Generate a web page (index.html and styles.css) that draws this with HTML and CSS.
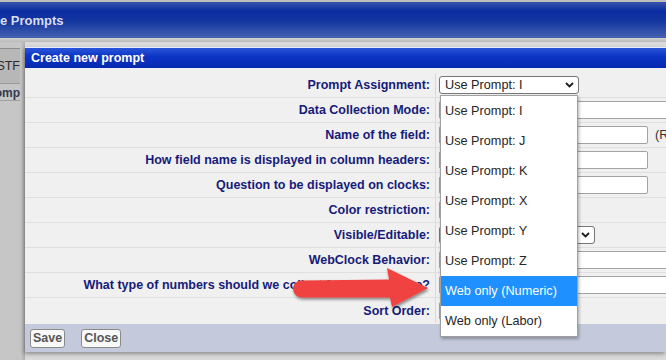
FILE: index.html
```html
<!DOCTYPE html>
<html lang="en">
<head>
  <meta charset="UTF-8" />
  <title>Prompts</title>
  <link rel="stylesheet" href="styles.css">
</head>
<body>
  <div class="topline"></div>
  <header class="appbar">
    <h1>e Prompts</h1>
  </header>
  <div class="appbar-sep"></div>

  <div class="main">
    <aside class="side">
      <div class="side-tab"><span>STF</span></div>
      <div class="side-link"><span>omp</span></div>
    </aside>

    <section class="dialog">
      <div class="dlg-title">Create new prompt</div>

      <div class="dlg-body">
        <div class="row">
          <div class="lbl">Prompt Assignment:</div>
          <div class="val">
            <div class="select-wrap">
              <div class="sel w140">
                <span>Use Prompt: I</span>
                <svg class="chev" width="9" height="6" viewBox="0 0 9 6"><path d="M1 1l3.5 3.5L8 1" /></svg>
              </div>
              <ul class="dropdown">
                <li>Use Prompt: I</li>
                <li>Use Prompt: J</li>
                <li>Use Prompt: K</li>
                <li>Use Prompt: X</li>
                <li>Use Prompt: Y</li>
                <li>Use Prompt: Z</li>
                <li class="active">Web only (Numeric)</li>
                <li>Web only (Labor)</li>
              </ul>
            </div>
          </div>
        </div>

        <div class="row">
          <div class="lbl">Data Collection Mode:</div>
          <div class="val"><div class="field w300"></div></div>
        </div>

        <div class="row">
          <div class="lbl">Name of the field:</div>
          <div class="val"><div class="field w209"></div><span class="note">(Required)</span></div>
        </div>

        <div class="row">
          <div class="lbl">How field name is displayed in column headers:</div>
          <div class="val"><div class="field w209"></div></div>
        </div>

        <div class="row">
          <div class="lbl">Question to be displayed on clocks:</div>
          <div class="val"><div class="field w209"></div></div>
        </div>

        <div class="row">
          <div class="lbl">Color restriction:</div>
          <div class="val"><div class="field w100"></div></div>
        </div>

        <div class="row">
          <div class="lbl">Visible/Editable:</div>
          <div class="val">
            <div class="sel sel-end w156">
              <svg class="chev" width="9" height="6" viewBox="0 0 9 6"><path d="M1 1l3.5 3.5L8 1" /></svg>
            </div>
          </div>
        </div>

        <div class="row">
          <div class="lbl">WebClock Behavior:</div>
          <div class="val"><div class="field w300"></div></div>
        </div>

        <div class="row">
          <div class="lbl">What type of numbers should we collect for this line type?</div>
          <div class="val"><div class="field w300"></div></div>
        </div>

        <div class="row">
          <div class="lbl">Sort Order:</div>
          <div class="val"><div class="field w100"></div></div>
        </div>
      </div>

      <div class="dlg-foot">
        <button class="btn">Save</button>
        <button class="btn">Close</button>
      </div>
    </section>
  </div>

  <!-- callout arrow laid over the form -->
  <svg class="callout" width="150" height="52" viewBox="0 0 150 52">
    <defs>
      <filter id="shade" x="-10%" y="-30%" width="130%" height="170%">
        <feDropShadow dx="1" dy="2" stdDeviation="1.6" flood-color="#000" flood-opacity="0.45" />
      </filter>
    </defs>
    <path filter="url(#shade)" d="M16.5 18.5 L104 17.5 L102 6 L143 26 L107 45 L105 35.5 L16.5 35.5 A8.5 8.5 0 0 1 16.5 18.5 Z" />
  </svg>
</body>
</html>
```

FILE: styles.css
```css
html, body {
  margin: 0;
  padding: 0;
}

body {
  position: relative;
  width: 666px;
  height: 360px;
  overflow: hidden;
  background-color: #e9e9e9;
  font-family: 'Liberation Sans', Arial, sans-serif;
}

.topline {
  height: 2px;
  background: #bdbdbd;
}

.appbar {
  height: 36px;
  display: flex;
  align-items: center;
  background: linear-gradient(to bottom, #3853aa 0%, #0a2c9f 25%, #14379f 55%, #4762b1 100%);
}

.appbar h1 {
  margin: 0;
  font-size: 13px;
  font-weight: 700;
  color: #d9ddef;
  white-space: nowrap;
}

.appbar-sep {
  height: 4px;
  background: linear-gradient(to bottom, #d2d2d2, #b9b9b9);
}

.main {
  display: flex;
  height: 318px;
  background: #dadada;
}

.side {
  flex: none;
  width: 25px;
  padding-top: 6px;
  box-sizing: border-box;
  background: linear-gradient(to right, #c6c6c6 0, #c6c6c6 21px, #adadad 25px);
}

.side-tab {
  width: 20px;
  height: 36px;
  box-sizing: border-box;
  display: flex;
  align-items: center;
  justify-content: flex-end;
  overflow: hidden;
  background: #b7b7b7;
  border-top: 1px solid #8d8d8d;
  border-bottom: 1px solid #9a9a9a;
  font-size: 12.5px;
  color: #2a2a2a;
}

.side-tab span {
  white-space: nowrap;
}

.side-link {
  width: 20px;
  height: 16px;
  margin-top: 1px;
  box-sizing: border-box;
  display: flex;
  align-items: center;
  justify-content: flex-end;
  overflow: hidden;
  border-bottom: 1px solid #a2a2a2;
  font-size: 12px;
  font-weight: 700;
  color: #33394f;
}

.side-link span {
  white-space: nowrap;
}

.dialog {
  flex: none;
  align-self: flex-start;
  width: 641px;
  margin-top: 5px;
  background: #f0f0f0;
  box-shadow: -1px 2px 4px rgba(0, 0, 0, 0.35);
}

.dlg-title {
  height: 21px;
  box-sizing: border-box;
  padding-left: 6px;
  display: flex;
  align-items: center;
  background: linear-gradient(to bottom, #e6ecff 0, #e6ecff 1px, #2a56da 1px, #0c34c4 45%, #0628b0 100%);
  font-size: 12.5px;
  font-weight: 700;
  color: #fff;
}

.dlg-body {
  padding-top: 5px;
  padding-bottom: 1px;
}

.row {
  display: grid;
  grid-template-columns: 411px 1fr;
  height: 25px;
  box-sizing: border-box;
  border-bottom: 1px solid #dfdfdf;
}

.row:last-child {
  border-bottom: none;
}

.lbl {
  display: flex;
  align-items: center;
  justify-content: flex-end;
  padding-right: 5px;
  border-right: 1px solid #d9d9d9;
  font-size: 12.5px;
  font-weight: 700;
  color: #161b7a;
  white-space: nowrap;
}

.val {
  display: flex;
  align-items: center;
  gap: 7px;
  padding-left: 3px;
}

.field {
  flex: none;
  height: 18px;
  box-sizing: border-box;
  border: 1px solid #a3a3a3;
  border-radius: 2px;
  background: #fff;
}

.note {
  font-size: 12.7px;
  color: #333;
  white-space: nowrap;
}

.w100 { width: 100px; }
.w140 { width: 140px; }
.w156 { width: 156px; }
.w209 { width: 209px; }
.w300 { width: 300px; }

.select-wrap {
  position: relative;
}

.sel {
  flex: none;
  height: 18px;
  box-sizing: border-box;
  display: flex;
  align-items: center;
  justify-content: space-between;
  padding: 0 4px 0 5px;
  border: 1px solid #767676;
  border-radius: 3px;
  background: #fff;
  font-size: 12.7px;
  color: #222;
  white-space: nowrap;
  overflow: hidden;
}

.sel-end {
  justify-content: flex-end;
}

.chev {
  flex: none;
}

.chev path {
  fill: none;
  stroke: #1c1c1c;
  stroke-width: 1.8;
}

.dropdown {
  position: absolute;
  top: 19px;
  left: 1px;
  z-index: 5;
  width: 138px;
  margin: 0;
  padding: 0;
  list-style: none;
  box-sizing: border-box;
  background: #fff;
  border: 1px solid #a0a0a0;
  box-shadow: 1px 2px 3px rgba(0, 0, 0, 0.3);
}

.dropdown li {
  height: 30px;
  display: flex;
  align-items: center;
  padding-left: 4px;
  font-size: 12.7px;
  color: #262626;
  white-space: nowrap;
}

.dropdown li.active {
  background: #1e90ff;
  color: #fff;
}

.dlg-foot {
  height: 28px;
  display: flex;
  align-items: center;
  gap: 16px;
  padding-left: 5px;
  background: #c4cadc;
}

.btn {
  height: 19px;
  margin: 0;
  padding: 0 2px;
  font-family: inherit;
  font-size: 12.5px;
  font-weight: 700;
  color: #565656;
  background: #f8f8f8;
  border: 1px solid #8a8a8a;
  border-radius: 3px;
}

.callout {
  position: absolute;
  left: 285px;
  top: 262px;
  z-index: 10;
  overflow: visible;
}

.callout path {
  fill: #f0423f;
}
```
